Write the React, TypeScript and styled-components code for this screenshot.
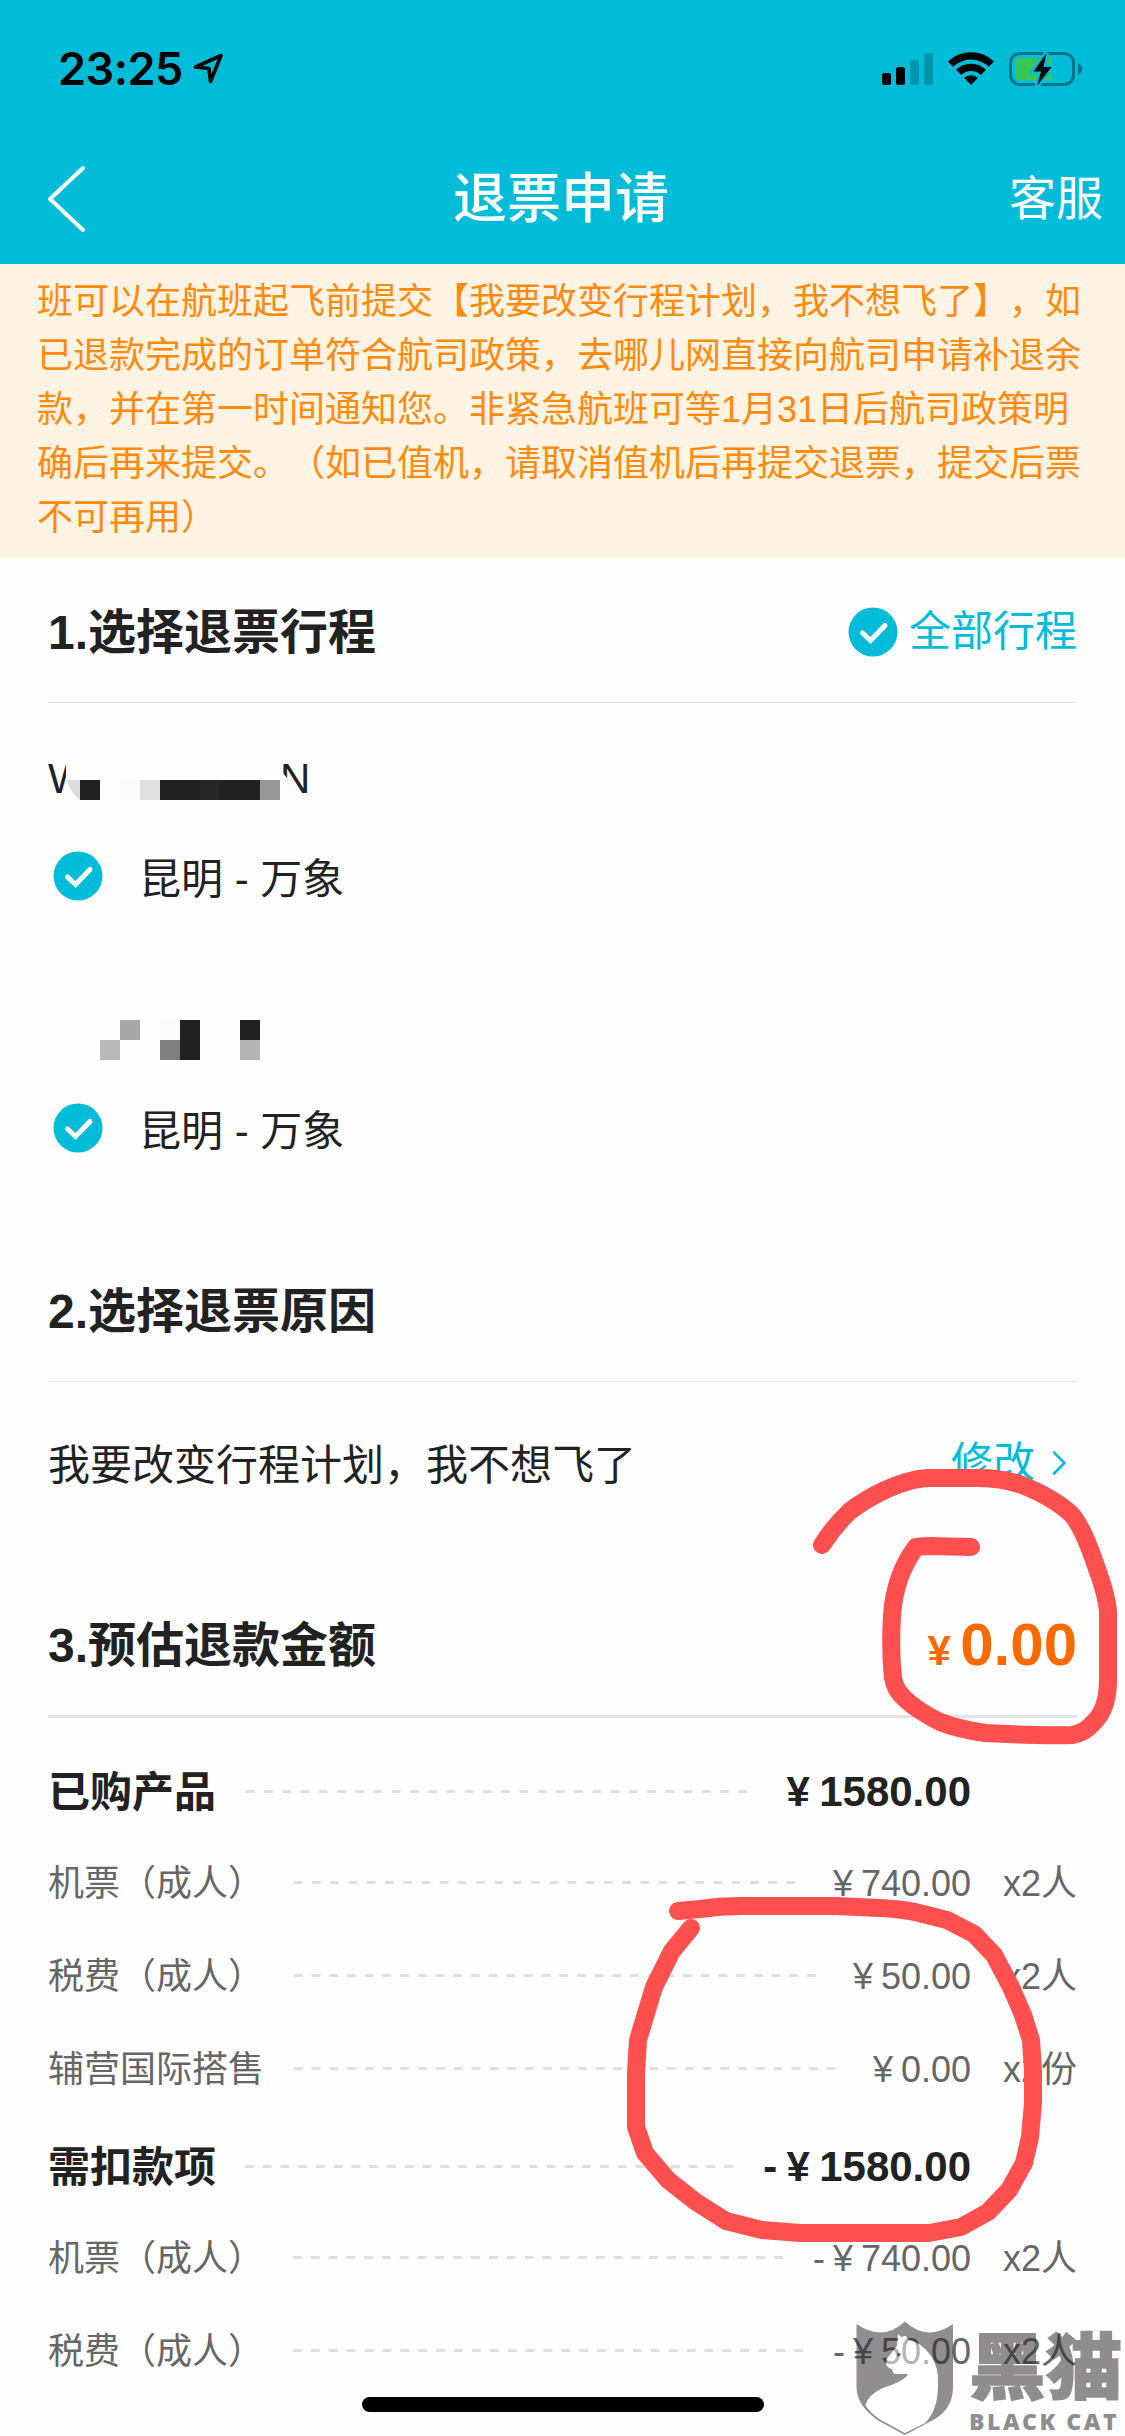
import React from 'react';
import styled, { createGlobalStyle, css } from 'styled-components';

const CYAN = '#00bcd8';
const INK = '#222222';

const GlobalStyle = createGlobalStyle`
  * { box-sizing: border-box; }
  html, body { margin: 0; padding: 0; background: #fff; }
  body {
    font-family: "Liberation Sans", "Noto Sans CJK SC", sans-serif;
    text-spacing-trim: space-all;
    color: ${INK};
  }
`;

const Page = styled.div`
  position: relative;
  width: 1125px;
  height: 2436px;
  overflow: hidden;
  background: #fefefe;
  display: flex;
  flex-direction: column;
`;

const Header = styled.header`
  height: 264px;
  flex: none;
  background: ${CYAN};
`;

const StatusBar = styled.div`
  height: 132px;
  padding: 6px 42px 0 58px;
  display: flex;
  align-items: center;
  justify-content: space-between;
`;

const Clock = styled.div`
  display: flex;
  align-items: center;
  gap: 10px;
  color: #000;
  font: 600 45px/54px Inter, sans-serif;
  letter-spacing: -0.5px;
`;

const StatusIcons = styled.div`
  display: flex;
  align-items: center;
`;

const NavBar = styled.nav`
  height: 132px;
  padding: 2px 22px 0 46px;
  display: grid;
  grid-template-columns: 200px 1fr 200px;
  align-items: center;
  color: #fff;
`;

const Title = styled.h1`
  margin: 0;
  padding-right: 27px;
  text-align: center;
  font-size: 54px;
  line-height: 64px;
  font-weight: 500;
`;

const NavAction = styled.span`
  font-size: 47px;
  line-height: 60px;
  text-align: right;
`;

const Notice = styled.div`
  flex: none;
  height: 294px;
  padding: 11px 0 0 37px;
  background: #fff3e4;
  color: #ff8a0c;
  font-size: 36px;
  line-height: 54px;
  white-space: nowrap;
`;

const Content = styled.main`
  flex: none;
  padding: 0 48px;
  display: flex;
  flex-direction: column;
`;

const SectionHead = styled.div<{ $rule?: number; $gap?: number }>`
  box-sizing: content-box;
  height: 144px;
  margin-top: ${(p) => p.$gap ?? 0}px;
  border-bottom: ${(p) => p.$rule ?? 1}px solid #e3e3e5;
  display: flex;
  align-items: center;
  justify-content: space-between;
`;

const SectionTitle = styled.h2`
  margin: 0;
  padding-top: 6px;
  font-size: 48px;
  line-height: 60px;
  font-weight: 700;
`;

const SelectAll = styled.div`
  display: flex;
  align-items: center;
  gap: 11px;
  padding-top: 3px;
  color: ${CYAN};
  font-size: 42px;
  line-height: 54px;
`;

const NameLine = styled.div`
  display: flex;
  height: 36px;
  margin-top: 61px;
`;

const Initial = styled.span`
  width: 18px;
  height: 36px;
  font-size: 42px;
  line-height: 30px;
  clip-path: inset(0 0 0 0);
`;

const LastInitial = styled(Initial)`
  width: 32px;
  clip-path: polygon(3px 0, 100% 0, 100% 100%, 11px 100%, 7px 14px, 3px 9px);
`;

const Mosaic = styled.div<{ $cols: number; $left?: number }>`
  display: grid;
  grid-template-columns: repeat(${(p) => p.$cols}, 20px);
  grid-auto-rows: 20px;
  align-self: flex-end;
  margin-left: ${(p) => p.$left ?? 0}px;
`;

const Tile = styled.i<{ $tone: string }>`
  background: ${(p) => p.$tone};
`;

const MaskedName = styled.div`
  display: flex;
  height: 40px;
  margin-top: 114px;
`;

const Trip = styled.div<{ $gap: number }>`
  height: 60px;
  margin-top: ${(p) => p.$gap}px;
  padding-left: 5px;
  display: flex;
  align-items: center;
  gap: 36px;
  font-size: 42px;
  line-height: 54px;
`;

const TripName = styled.span`
  padding-top: 7px;
`;

const Reason = styled.div`
  height: 162px;
  display: flex;
  align-items: center;
  justify-content: space-between;
  font-size: 42px;
  line-height: 54px;
`;

const ReasonText = styled.span`
  padding-top: 5px;
`;

const EditLink = styled.span`
  display: flex;
  align-items: center;
  gap: 17px;
  padding-right: 10px;
  color: ${CYAN};
`;

const Total = styled.div`
  display: flex;
  align-items: baseline;
  padding-top: 9px;
  color: #ff6a00;
  font-size: 60px;
  line-height: 70px;
  font-weight: 700;
`;

const Yen = styled.span<{ $size?: number }>`
  display: inline-block;
  width: 1em;
  text-align: center;
  ${(p) => p.$size && css`font-size: ${p.$size}px;`}
`;

const Bill = styled.div`
  padding-top: 22px;
  display: flex;
  flex-direction: column;
`;

const BillRow = styled.div<{ $strong?: boolean }>`
  display: flex;
  align-items: center;
  height: ${(p) => (p.$strong ? 96 : 93)}px;
  padding-top: ${(p) => (p.$strong ? 6 : 0)}px;
  font-size: ${(p) => (p.$strong ? 42 : 36)}px;
  line-height: 54px;
  font-weight: ${(p) => (p.$strong ? 700 : 400)};
  color: ${(p) => (p.$strong ? INK : '#666')};
`;

const BillLabel = styled.span<{ $strong?: boolean }>`
  width: ${(p) => (p.$strong ? 168 : 216)}px;
  padding-top: 3px;
  white-space: nowrap;
`;

const Leader = styled.span`
  flex: 1;
  height: 3px;
  margin: 0 25px;
  background-image: linear-gradient(90deg, transparent 25%, #dfdfdf 25% 75%, transparent 75%);
  background-size: 18px 3px;
  background-repeat: round no-repeat;
`;

const Amount = styled.span`
  padding-top: 2px;
  white-space: nowrap;
`;

const Count = styled.span`
  width: 106px;
  padding-top: 3px;
  text-align: right;
`;

const HomeIndicator = styled.div`
  position: absolute;
  left: 362px;
  top: 2397px;
  width: 402px;
  height: 15px;
  border-radius: 8px;
  background: #000;
`;

const Scribble = styled.svg`
  position: absolute;
  inset: 0;
  pointer-events: none;
`;

const Watermark = styled.div`
  position: absolute;
  left: 855px;
  top: 2320px;
  display: flex;
  gap: 15px;
  color: #2a2728;
`;

const WatermarkText = styled.div`
  display: flex;
  flex-direction: column;
  opacity: 0.52;
`;

const BrandName = styled.span`
  font: 900 76px/76px "Noto Sans CJK SC", sans-serif;
  padding-top: 4px;
  height: 88px;
  -webkit-text-stroke: 1.5px #2a2728;
  white-space: nowrap;
  transform: scale(1.01, 0.94);
  transform-origin: 0 50%;
`;

const BrandLatin = styled.span`
  font: 800 23px/26px "Open Sans", sans-serif;
  letter-spacing: 2.5px;
  white-space: nowrap;
`;

const Check = () => (
  <svg width="50" height="50" viewBox="0 0 50 50">
    <circle cx="25" cy="25" r="24.5" fill={CYAN} />
    <path d="M14.5 26 L22.5 33.5 L37 18.5" fill="none" stroke="#fff" strokeWidth="5" strokeLinecap="round" />
  </svg>
);

const LocationArrow = () => (
  <svg width="32" height="32" viewBox="0 0 32 32">
    <path d="M28 2.5 L2.5 14 L16 15.5 L17.5 28.5 Z" fill="none" stroke="#000" strokeWidth="3.6" strokeLinejoin="round" />
  </svg>
);

const StatusGlyphs = () => (
  <svg width="202" height="36" viewBox="881 51 202 36">
    <rect x="882" y="73" width="9" height="12" rx="2.5" />
    <rect x="896" y="67" width="9" height="18" rx="2.5" />
    <g opacity="0.2">
      <rect x="910" y="60" width="9" height="25" rx="2.5" />
      <rect x="924" y="53" width="9" height="32" rx="2.5" />
    </g>
    <path d="M948 61.5 A33 33 0 0 1 994 61.5 L988.8 66.8 A25.5 25.5 0 0 0 953.2 66.8 Z" />
    <path d="M956 69.8 A21.5 21.5 0 0 1 986 69.8 L980.8 75 A14 14 0 0 0 961.2 75 Z" />
    <path d="M964 77.8 A10.5 10.5 0 0 1 978 77.8 L971 85 Z" />
    <rect x="1010.5" y="53.5" width="63" height="31" rx="9.5" fill="none" stroke="#000" strokeOpacity="0.38" strokeWidth="3" />
    <path d="M1078 63 Q1082 65 1082 69 Q1082 73 1078 75 Z" opacity="0.4" />
    <path d="M1019 58 H1052 V80 H1019 Q1015 80 1015 76 V62 Q1015 58 1019 58 Z" fill="#35c759" />
    <path
      d="M1046.5 53 L1033.5 71.5 H1041 L1037 86 L1051.5 67 H1043.5 Z"
      stroke={CYAN}
      strokeWidth="5"
      paintOrder="stroke"
    />
  </svg>
);

const BackArrow = () => (
  <svg width="42" height="70" viewBox="0 0 42 70">
    <path d="M37 4 L4 35 L37 66" fill="none" stroke="#fff" strokeWidth="4" strokeLinecap="round" strokeLinejoin="round" />
  </svg>
);

const Chevron = () => (
  <svg width="15" height="26" viewBox="0 0 15 26">
    <path d="M2 2.5 L12.5 13 L2 23.5" fill="none" stroke={CYAN} strokeWidth="2.6" strokeLinecap="round" />
  </svg>
);

const CAT =
  'M43 14 L46 17 L51 16 L52 19 Q66 22 76 36 Q84 48 83 64 Q83 90 70 103 L50 113 L26 100 Q15 93 10.5 85 Q13 75 28 68 Q50 61 53 54 H41 Q38 54 37 49 Q31 47 31 43 Q32 38 34 36 L42 26 Z';

const Shield = () => (
  <svg width="99" height="116" viewBox="0 0 99 116">
    <path
      fillRule="evenodd"
      fill="#2a2728"
      opacity="0.52"
      d={`M1.5 4 Q28 22 50 1.5 Q72 22 98 4 V67 Q98 88 80 99 L50 115 L24 101 Q1.5 86 1.5 67 Z ${CAT}`}
    />
    <path fill="#fff" opacity="0.5" d={CAT} />
    <path d="M42 33 L46 34 L43 37 Z" fill="#444" />
  </svg>
);

const NOTICE = [
  '班可以在航班起飞前提交【我要改变行程计划，我不想飞了】，如',
  '已退款完成的订单符合航司政策，去哪儿网直接向航司申请补退余',
  '款，并在第一时间通知您。非紧急航班可等1月31日后航司政策明',
  '确后再来提交。（如已值机，请取消值机后再提交退票，提交后票',
  '不可再用）',
];

const FIRST_MASK = ['#222', 'transparent', '#fbfbfb', '#e0e0e0', '#222', '#222', '#262626', '#222', '#222', '#979797'];

const SECOND_MASK = [
  'transparent', '#a8a8a8', 'transparent', '#fbfbfb', '#222', 'transparent', 'transparent', '#222',
  '#b8b8b8', 'transparent', 'transparent', '#808080', '#222', 'transparent', 'transparent', '#b4b4b4',
];

type Item = { label: string; value: string; minus?: boolean; count?: string; strong?: boolean };

const ITEMS: Item[] = [
  { label: '已购产品', value: '1580.00', strong: true },
  { label: '机票（成人）', value: '740.00', count: 'x2人' },
  { label: '税费（成人）', value: '50.00', count: 'x2人' },
  { label: '辅营国际搭售', value: '0.00', count: 'x2份' },
  { label: '需扣款项', value: '1580.00', minus: true, strong: true },
  { label: '机票（成人）', value: '740.00', minus: true, count: 'x2人' },
  { label: '税费（成人）', value: '50.00', minus: true, count: 'x2人' },
];

export default function App() {
  return (
    <Page>
      <GlobalStyle />
      <Header>
        <StatusBar>
          <Clock>
            23:25
            <LocationArrow />
          </Clock>
          <StatusIcons>
            <StatusGlyphs />
          </StatusIcons>
        </StatusBar>
        <NavBar>
          <BackArrow />
          <Title>退票申请</Title>
          <NavAction>客服</NavAction>
        </NavBar>
      </Header>

      <Notice>
        {NOTICE.map((line) => (
          <div key={line}>{line}</div>
        ))}
      </Notice>

      <Content>
        <SectionHead>
          <SectionTitle>1.选择退票行程</SectionTitle>
          <SelectAll>
            <Check />
            全部行程
          </SelectAll>
        </SectionHead>

        <NameLine>
          <Initial>W</Initial>
          <svg width="14" height="36" viewBox="0 0 14 36">
            <path d="M1 16 H14 V36 Q4 28 1 16 Z" fill="#dcdcdc" />
          </svg>
          <Mosaic $cols={10}>
            {FIRST_MASK.map((tone, i) => (
              <Tile key={i} $tone={tone} />
            ))}
          </Mosaic>
          <LastInitial>N</LastInitial>
        </NameLine>
        <Trip $gap={46}>
          <Check />
          <TripName>昆明 - 万象</TripName>
        </Trip>

        <MaskedName>
          <Mosaic $cols={8} $left={52}>
            {SECOND_MASK.map((tone, i) => (
              <Tile key={i} $tone={tone} />
            ))}
          </Mosaic>
        </MaskedName>
        <Trip $gap={38}>
          <Check />
          <TripName>昆明 - 万象</TripName>
        </Trip>

        <SectionHead $gap={79}>
          <SectionTitle>2.选择退票原因</SectionTitle>
        </SectionHead>
        <Reason>
          <ReasonText>我要改变行程计划，我不想飞了</ReasonText>
          <EditLink>
            修改
            <Chevron />
          </EditLink>
        </Reason>

        <SectionHead $gap={27} $rule={3}>
          <SectionTitle>3.预估退款金额</SectionTitle>
          <Total>
            <Yen $size={42}>¥</Yen>0.00
          </Total>
        </SectionHead>

        <Bill>
          {ITEMS.map((item, i) => (
            <BillRow key={i} $strong={item.strong}>
              <BillLabel $strong={item.strong}>{item.label}</BillLabel>
              <Leader />
              <Amount>
                {item.minus && '-'}
                <Yen>¥</Yen>
                {item.value}
              </Amount>
              <Count>{item.count}</Count>
            </BillRow>
          ))}
        </Bill>
      </Content>

      <HomeIndicator />

      <Scribble width="1125" height="2436" viewBox="0 0 1125 2436">
        <g fill="none" stroke="#ff5050" strokeWidth="18" strokeLinecap="round" strokeLinejoin="round">
          <path d="M822 1545 Q834 1526 850 1511 Q866 1499 885 1490 Q912 1478 930 1478 H978 Q1002 1478 1022 1485 Q1054 1498 1071 1514 Q1082 1525 1096 1566 Q1107 1596 1108 1612 V1683 Q1107 1710 1094 1722 Q1085 1733 1072 1735 Q1040 1736 985 1733 Q958 1729 940 1722 Q918 1711 905 1699 Q895 1690 893 1678 Q890 1650 892 1615 Q895 1575 916 1547 Q924 1546 930 1546 L971 1547" />
          <path d="M678 1911 L700 1909 Q720 1906 739 1906 H836 L880 1908 Q900 1909 915 1912 L947 1920 L974 1934 L994 1955 L1011 1987 L1023 2015 L1031 2040 L1033 2070 V2103 L1030 2137 L1024 2163 L1009 2190 L988 2212 L961 2227 L929 2233 H800 L762 2230 L726 2221 L696 2202 L668 2180 L645 2153 L636 2127 V2073 L638 2040 L654 1987 L672 1951 L691 1928" />
        </g>
      </Scribble>

      <Watermark>
        <Shield />
        <WatermarkText>
          <BrandName>黑猫</BrandName>
          <BrandLatin>BLACK CAT</BrandLatin>
        </WatermarkText>
      </Watermark>
    </Page>
  );
}
